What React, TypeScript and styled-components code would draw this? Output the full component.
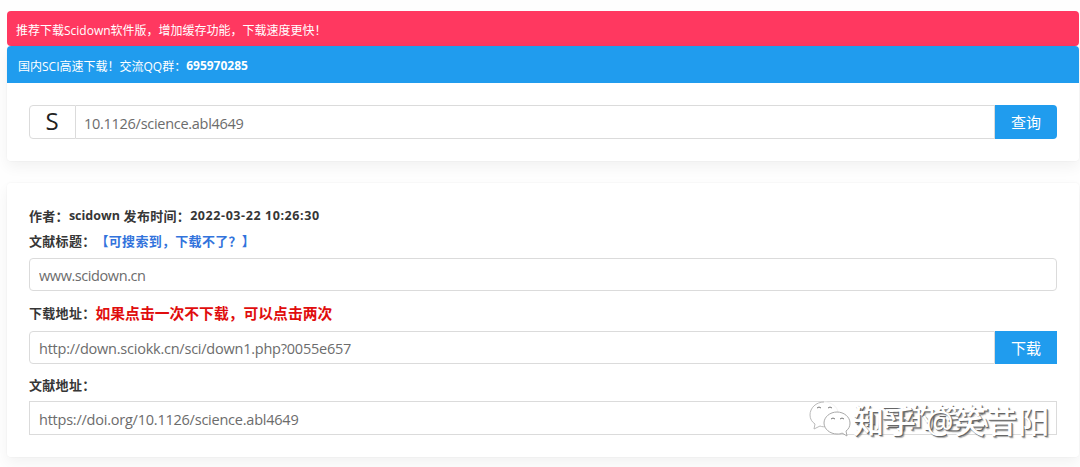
import styled, { createGlobalStyle } from 'styled-components';

const GlobalStyle = createGlobalStyle`
    * {
        box-sizing: border-box;
    }

    body {
        margin: 0;
        background: #fefefe;
        font-family: 'Open Sans', 'Noto Sans CJK SC', sans-serif;
        color: #363636;
        overflow: hidden;
    }
`;

const Page = styled.main`
    position: relative;
    display: flex;
    flex-direction: column;
    height: 467px;
    padding: 11px 1px 0 7px;
`;

const Notice = styled.div`
    display: flex;
    align-items: center;
    height: 35px;
    padding: 2px 9px 0;
    border-radius: 4px;
    background: #ff3860;
    color: #fff;
    font-size: 12px;
`;

const Card = styled.section`
    border-radius: 4px;
    background: #fff;
    box-shadow: 0 6px 14px rgba(10, 10, 10, .05), 0 0 0 1px rgba(10, 10, 10, .015);

    & + & {
        margin-top: 22px;
    }
`;

const CardHeader = styled.header`
    display: flex;
    align-items: center;
    height: 37px;
    padding: 2px 11px 0;
    border-radius: 4px 4px 0 0;
    background: #209cee;
    color: #fff;
    font-size: 12px;
`;

const SearchBody = styled.div`
    padding: 22px;
`;

const DetailBody = styled.div`
    height: 274px;
    padding: 20px 22px 0;
`;

const Field = styled.div<{ $height?: number }>`
    display: flex;
    height: ${props => props.$height || 33}px;
`;

const Addon = styled.span`
    display: flex;
    align-items: center;
    justify-content: center;
    width: 47px;
    padding: 0 1px 2px 0;
    border: 1px solid #dbdbdb;
    border-radius: 4px 0 0 4px;
    color: #222;
    font-size: 24px;
    font-weight: 500;
    line-height: 1;
`;

const Input = styled.input<{ $radius?: string; $spacing?: string }>`
    flex: 1;
    min-width: 0;
    height: 100%;
    margin: 0;
    padding: 2px 9px 0;
    border: 1px solid #dbdbdb;
    border-radius: ${props => props.$radius || '0'};
    outline: none;
    background: #fff;
    color: #6c6c6c;
    font-family: inherit;
    font-size: 14.5px;
    letter-spacing: ${props => props.$spacing || '-.23px'};

    ${Addon} + & {
        padding-left: 8px;
        border-left: 0;
    }
`;

const Button = styled.button<{ $rounded?: boolean }>`
    width: 62px;
    height: 100%;
    padding: 0 0 1px;
    border: 0;
    border-radius: ${props => props.$rounded ? '0 4px 4px 0' : '0'};
    background: #209cee;
    color: #fff;
    font-family: inherit;
    font-size: 15px;
    cursor: pointer;
`;

const Label = styled.div<{ $height: number; $top?: number; $bottom?: number }>`
    display: flex;
    align-items: center;
    height: ${props => props.$height}px;
    padding-top: ${props => props.$top || 0}px;
    padding-bottom: ${props => props.$bottom || 0}px;
    font-size: 13px;
    font-weight: 700;
    letter-spacing: .3px;
    white-space: pre;
`;

const Meta = styled.span<{ $spacing?: string }>`
    font-size: 12.5px;
    letter-spacing: ${props => props.$spacing || '0'};
`;

const TitleLink = styled.a`
    color: #3273dc;
    cursor: pointer;
`;

const Warning = styled.span`
    color: #e00d0d;
    font-size: 14.8px;
    letter-spacing: 0;
`;

const Watermark = styled.div`
    position: absolute;
    top: 396px;
    left: 807px;
    width: 250px;
    height: 46px;
    pointer-events: none;
`;

const WatermarkIcon = styled.svg`
    position: absolute;
    top: 3px;
    left: 1px;
`;

const WatermarkText = styled.span<{ $top: number; $left: number; $size: number; $spacing?: string }>`
    position: absolute;
    top: ${props => props.$top}px;
    left: ${props => props.$left}px;
    color: #fff;
    font-size: ${props => props.$size}px;
    font-weight: 500;
    letter-spacing: ${props => props.$spacing || '0'};
    line-height: 34px;
    white-space: pre;
    text-shadow: 1px 1px 0 #666, 2px 2px 1px rgba(90, 90, 90, .5);
`;

function App() {
    return (
        <>
            <GlobalStyle />
            <Page>
                <Notice>推荐下载Scidown软件版，增加缓存功能，下载速度更快！</Notice>
                <Card>
                    <CardHeader>国内SCI高速下载！交流QQ群：<b>695970285</b></CardHeader>
                    <SearchBody>
                        <Field $height={34}>
                            <Addon>S</Addon>
                            <Input $spacing="-.28px" defaultValue="10.1126/science.abl4649" />
                            <Button $rounded>查询</Button>
                        </Field>
                    </SearchBody>
                </Card>
                <Card>
                    <DetailBody>
                        <Label $height={24}>作者：<Meta>scidown</Meta> 发布时间：<Meta $spacing=".58px">2022-03-22 10:26:30</Meta></Label>
                        <Label $height={31} $bottom={4}>
                            <span>文献标题：</span>
                            <TitleLink>【可搜索到，下载不了？】</TitleLink>
                        </Label>
                        <Field>
                            <Input $radius="4px" $spacing="-.42px" defaultValue="www.scidown.cn" />
                        </Field>
                        <Label $height={40} $top={3}>下载地址：<Warning>如果点击一次不下载，可以点击两次</Warning></Label>
                        <Field>
                            <Input $radius="4px 0 0 4px" defaultValue="http://down.sciokk.cn/sci/down1.php?0055e657" />
                            <Button>下载</Button>
                        </Field>
                        <Label $height={37} $top={3}>文献地址：</Label>
                        <Field $height={34}>
                            <Input defaultValue="https://doi.org/10.1126/science.abl4649" />
                        </Field>
                    </DetailBody>
                </Card>
                <Watermark>
                    <WatermarkIcon width="46" height="42" viewBox="0 0 46 42" fill="#fff" stroke="#aaa" strokeWidth="1">
                        <path d="M16 3C8 3 2 9 2 16c0 4 2 7 5 9l-1 5 6-3c2 1 5 1 8 0" stroke="#bbb" />
                        <path d="M16 3c7 0 13 4 14 10" stroke="#f4f4f4" />
                        <path d="M29 13c-7 0-13 5-13 11s6 11 13 11c2 0 4 0 5-1l5 3-1-5c3-2 4-5 4-8 0-6-6-11-13-11z" />
                        <path d="M9 9q2-2 4 0M20 9q2-2 4 0M23 20q2-2 4 0M32 20q2-2 4 0" fill="none" stroke="#777" />
                    </WatermarkIcon>
                    <WatermarkText $top={5} $left={47} $size={27}>狗哥的笔芯</WatermarkText>
                    <WatermarkText $top={8} $left={46} $size={31} $spacing=".9px">知乎 @笑昔阳</WatermarkText>
                </Watermark>
            </Page>
        </>
    );
}

export default App;
